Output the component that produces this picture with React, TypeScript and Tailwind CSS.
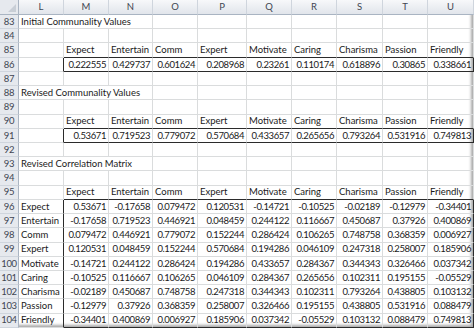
import React from "react";

const COL_WIDTHS = "19px 45px 45px 44px 45px 49px 45px 45px 46px 45px 46px";
const LETTERS = ["L", "M", "N", "O", "P", "Q", "R", "S", "T", "U"];
const NAMES = ["Expect", "Entertain", "Comm", "Expert", "Motivate", "Caring", "Charisma", "Passion", "Friendly"];

const MATRIX: string[][] = [
  ["0.53671", "-0.17658", "0.079472", "0.120531", "-0.14721", "-0.10525", "-0.02189", "-0.12979", "-0.34401"],
  ["-0.17658", "0.719523", "0.446921", "0.048459", "0.244122", "0.116667", "0.450687", "0.37926", "0.400869"],
  ["0.079472", "0.446921", "0.779072", "0.152244", "0.286424", "0.106265", "0.748758", "0.368359", "0.006927"],
  ["0.120531", "0.048459", "0.152244", "0.570684", "0.194286", "0.046109", "0.247318", "0.258007", "0.185906"],
  ["-0.14721", "0.244122", "0.286424", "0.194286", "0.433657", "0.284367", "0.344343", "0.326466", "0.037342"],
  ["-0.10525", "0.116667", "0.106265", "0.046109", "0.284367", "0.265656", "0.102311", "0.195155", "-0.05529"],
  ["-0.02189", "0.450687", "0.748758", "0.247318", "0.344343", "0.102311", "0.793264", "0.438805", "0.103132"],
  ["-0.12979", "0.37926", "0.368359", "0.258007", "0.326466", "0.195155", "0.438805", "0.531916", "0.088479"],
  ["-0.34401", "0.400869", "0.006927", "0.185906", "0.037342", "-0.05529", "0.103132", "0.088479", "0.749813"],
];

type Box = "single" | "top" | "mid" | "bottom";
type Row = {
  n: number;
  title?: string;
  headers?: boolean;
  label?: string;
  values?: string[];
  box?: Box;
};

const ROWS: Row[] = [
  { n: 83, title: "Initial Communality Values" },
  { n: 84 },
  { n: 85, headers: true },
  {
    n: 86,
    values: ["0.222555", "0.429737", "0.601624", "0.208968", "0.23261", "0.110174", "0.618896", "0.30865", "0.338661"],
    box: "single",
  },
  { n: 87 },
  { n: 88, title: "Revised Communality Values" },
  { n: 89 },
  { n: 90, headers: true },
  {
    n: 91,
    values: ["0.53671", "0.719523", "0.779072", "0.570684", "0.433657", "0.265656", "0.793264", "0.531916", "0.749813"],
    box: "single",
  },
  { n: 92 },
  { n: 93, title: "Revised Correlation Matrix" },
  { n: 94 },
  { n: 95, headers: true },
  ...MATRIX.map((vals, i) => ({
    n: 96 + i,
    label: NAMES[i],
    values: vals,
    box: (i === 0 ? "top" : i === MATRIX.length - 1 ? "bottom" : "mid") as Box,
  })),
];

const FONT = { fontFamily: "Lato, 'Open Sans', 'Liberation Sans', sans-serif" };

function RowHeader({ n }: { n: number }) {
  return (
    <div className="flex items-center justify-center border-r border-b border-r-[#a9b4c2] border-b-[#cfd5dd] bg-[#e6e9ee] text-[9.5px] tracking-[-0.3px] text-[#3f4652] leading-none">
      {n}
    </div>
  );
}

function DataCells({ row, next }: { row: Row; next?: Row }) {
  const boxed = !!row.box;
  const closesBottom = row.box === "single" || row.box === "bottom";
  const nextOpens = next?.box === "single" || next?.box === "top";
  const darkBottom = closesBottom || nextOpens;

  const cells: React.ReactNode[] = [];

  if (row.title) {
    cells.push(
      <div
        key="title"
        className="col-span-3 flex items-center whitespace-nowrap border-r border-b border-[#dadcdd] pl-[2px] text-[9.5px] leading-none text-[#1a1a1a]"
      >
        {row.title}
      </div>
    );
    for (let c = 3; c < 10; c++) {
      cells.push(<div key={c} className="border-r border-b border-[#dadcdd]" />);
    }
    return <>{cells}</>;
  }

  // column L
  cells.push(
    <div
      key="L"
      className={
        "flex items-center whitespace-nowrap border-b pl-[2px] text-[9.5px] leading-none text-[#1a1a1a] " +
        (boxed ? "border-r border-r-[#2b2b2b] border-b-[#dadcdd]" : "border-r border-[#dadcdd]")
      }
    >
      {row.label ?? ""}
    </div>
  );

  for (let c = 0; c < 9; c++) {
    const isLast = c === 8;
    const right = boxed && isLast ? "border-r-[#2b2b2b]" : "border-r-[#dadcdd]";
    const bottom = darkBottom ? "border-b-[#2b2b2b]" : "border-b-[#dadcdd]";
    let content: React.ReactNode = null;
    let align = "justify-start pl-[2px]";
    if (row.headers) content = NAMES[c];
    if (row.values) {
      content = row.values[c];
      align = "justify-end pr-[2px] tracking-[-0.4px]";
    }
    cells.push(
      <div
        key={c}
        className={`flex items-center whitespace-nowrap border-r border-b text-[9.5px] leading-none text-[#1a1a1a] ${align} ${right} ${bottom}`}
      >
        {content}
      </div>
    );
  }
  return <>{cells}</>;
}

export default function App() {
  return (
    <div className="h-[328px] w-[474px] overflow-hidden bg-white" style={FONT}>
      <div
        className="grid h-full w-full shadow-[inset_-3px_-3px_3px_rgba(0,0,0,0.35)]"
        style={{ gridTemplateColumns: COL_WIDTHS, gridTemplateRows: "15px repeat(22, 14.22px)" }}
      >
        {/* corner */}
        <div className="relative border-r border-b border-r-[#a9b4c2] border-b-[#a9b4c2] bg-[#e6e9ee]">
          <div className="absolute right-[2px] bottom-[2px] h-0 w-0 border-b-[8px] border-l-[8px] border-b-[#c8ced6] border-l-transparent" />
        </div>
        {LETTERS.map((l) => (
          <div
            key={l}
            className="flex items-center justify-center border-r border-b border-r-[#cfd5dd] border-b-[#a9b4c2] bg-gradient-to-b from-[#f7f8fa] to-[#e1e5eb] text-[9.5px] leading-none text-[#3f4652]"
          >
            {l}
          </div>
        ))}
        {ROWS.map((row, i) => (
          <React.Fragment key={row.n}>
            <RowHeader n={row.n} />
            <DataCells row={row} next={ROWS[i + 1]} />
          </React.Fragment>
        ))}
      </div>
    </div>
  );
}
